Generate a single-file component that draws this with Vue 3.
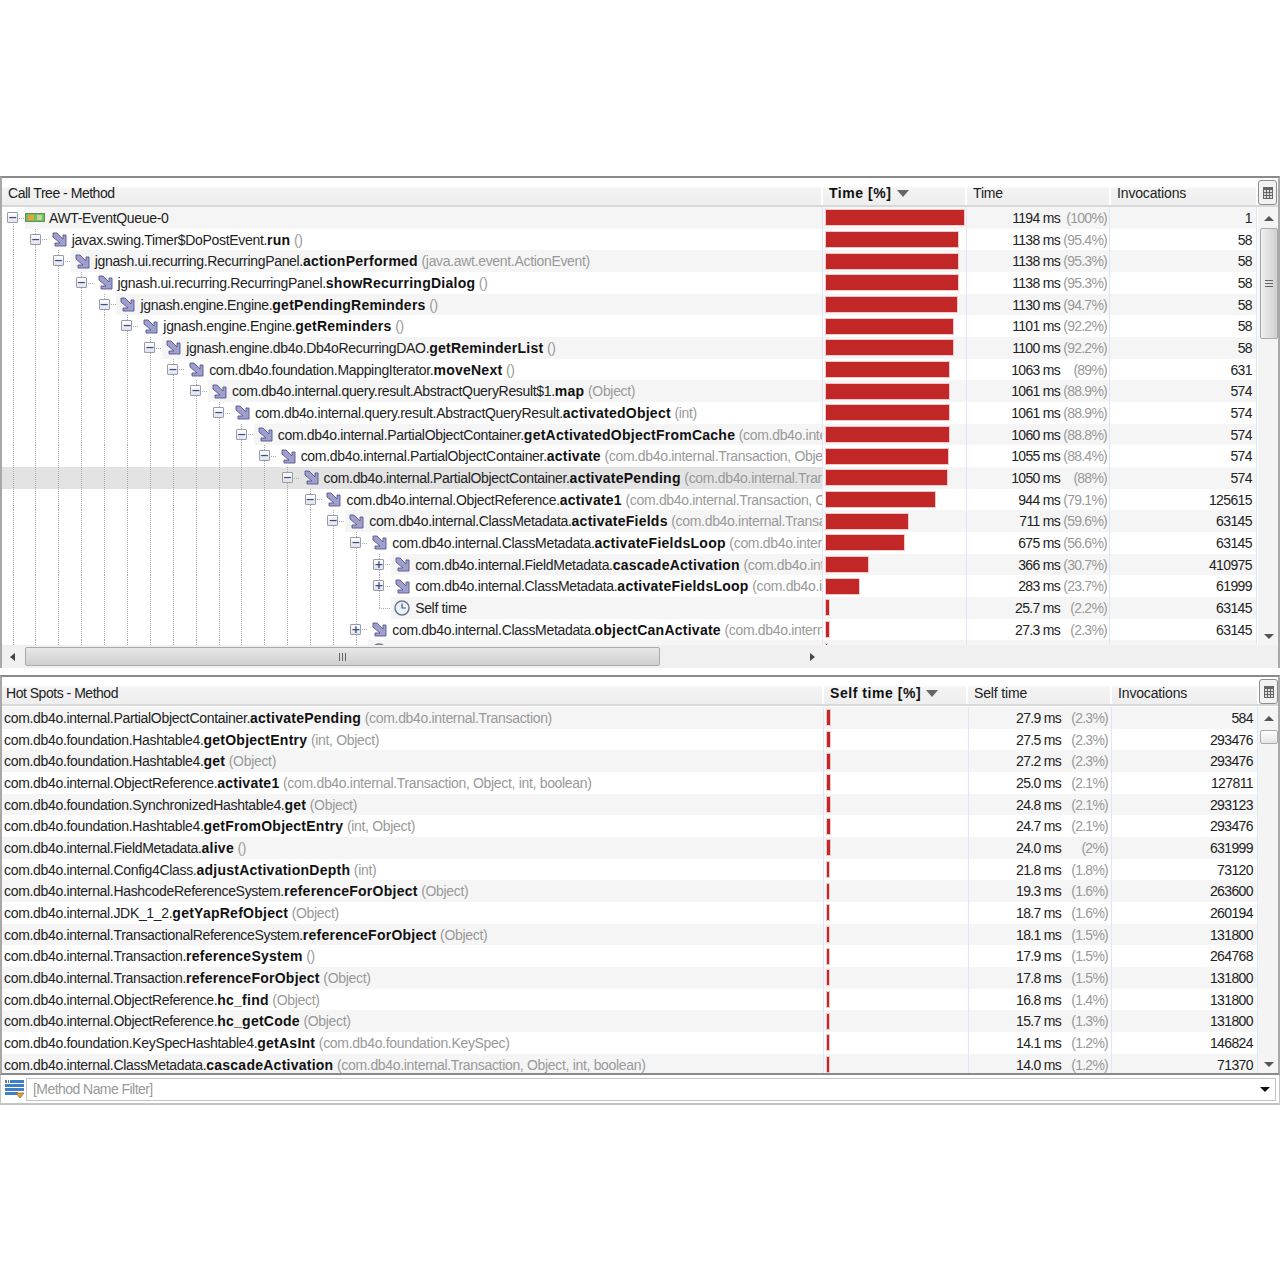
<template>
  <div class="page">
    <section class="panel tree-panel">
      <div class="head">
        <div class="hcell name">Call Tree - Method</div>
        <div class="hcell bar-h"><b>Time [%]</b><i class="sort"></i></div>
        <div class="hcell time-h">Time</div>
        <div class="hcell inv-h">Invocations</div>
        <div class="corner">
          <svg width="10" height="12" viewBox="0 0 10 12"><path d="M0 0h10v12H0z" fill="#666" /><path d="M1 3h2v2H1zM4 3h2v2H4zM7 3h2v2H7zM1 6h2v2H1zM4 6h2v2H4zM7 6h2v2H7zM1 9h2v2H1zM4 9h2v2H4zM7 9h2v2H7z" fill="#ddd" /></svg>
        </div>
      </div>
      <div class="body tree-body">
        <div class="rows">
          <div v-for="(r, i) in treeRows" :key="i" class="row" :class="{ odd: i % 2 === 1, selected: i === 12 }">
            <div class="name tree-name">
              <span v-for="g in r.depth" :key="g" class="guide"></span>
              <span class="guide own" :class="{ root: i === 0, last: r.kind === 'self' }">
                <span v-if="r.kind !== 'self'" class="box">{{ r.open ? '−' : '+' }}</span>
              </span>
              <div class="label">
                <svg v-if="r.kind === 'thread'" class="thread" width="20" height="9" viewBox="0 0 20 9">
                  <rect x="0.5" y="0.5" width="19" height="8" fill="#6fbf5f" stroke="#6d8a55" />
                  <rect x="3" y="2" width="6" height="5" fill="#e8a23c" />
                  <rect x="12" y="2" width="5" height="5" fill="#b5dd9a" />
                </svg>
                <svg v-else-if="r.kind === 'self'" class="ico clock" width="16" height="16" viewBox="0 0 16 16">
                  <circle cx="8" cy="8" r="7" fill="#eef2fa" stroke="#6b7791" stroke-width="1.5" />
                  <path d="M8 3.5V8h4" fill="none" stroke="#4a5570" stroke-width="1.2" />
                </svg>
                <svg v-else class="ico" width="15" height="15" viewBox="0 0 15 15">
                  <path d="M1 1h4l6 6V3h3v11H3v-3h5L1 5z" fill="#9f9fce" stroke="#55558a" stroke-width="0.9" stroke-linejoin="round" />
                </svg>
                <span class="txt"><template v-if="r.pkg">{{ r.pkg }}<b>{{ r.method }}</b> <em>{{ r.args }}</em></template><template v-else>{{ r.method }}</template></span>
              </div>
            </div>
            <div class="barcell"><span class="bar" :style="{ width: barWidth(r.pct) }"></span></div>
            <div class="timecell"><span class="ms">{{ r.time }}</span><span class="pct">({{ r.pct }}%)</span></div>
            <div class="invcell">{{ r.inv }}</div>
          </div>
        </div>
        <div class="vscroll">
          <span class="arrow up"></span>
          <div class="thumb big"><span class="grip"></span></div>
          <div class="spacer"></div>
          <span class="arrow down"></span>
        </div>
      </div>
      <div class="hscroll">
        <span class="arrow left"></span>
        <div class="hthumb"><span class="hgrip"></span></div>
        <div class="spacer"></div>
        <span class="arrow right"></span>
      </div>
    </section>

    <section class="panel hot-panel">
      <div class="head">
        <div class="hcell name small-pad">Hot Spots - Method</div>
        <div class="hcell bar-h"><b>Self time [%]</b><i class="sort"></i></div>
        <div class="hcell time-h">Self time</div>
        <div class="hcell inv-h">Invocations</div>
        <div class="corner">
          <svg width="10" height="12" viewBox="0 0 10 12"><path d="M0 0h10v12H0z" fill="#666" /><path d="M1 3h2v2H1zM4 3h2v2H4zM7 3h2v2H7zM1 6h2v2H1zM4 6h2v2H4zM7 6h2v2H7zM1 9h2v2H1zM4 9h2v2H4zM7 9h2v2H7z" fill="#ddd" /></svg>
        </div>
      </div>
      <div class="body hot-body">
        <div class="rows">
          <div v-for="(r, i) in hotRows" :key="i" class="row" :class="{ odd: i % 2 === 1 }">
            <div class="name hot-name"><span class="txt">{{ r.pkg }}<b>{{ r.method }}</b> <em>{{ r.args }}</em></span></div>
            <div class="barcell"><span class="bar" :style="{ width: barWidth(r.pct) }"></span></div>
            <div class="timecell"><span class="ms">{{ r.time }}</span><span class="pct">({{ r.pct }}%)</span></div>
            <div class="invcell">{{ r.inv }}</div>
          </div>
        </div>
        <div class="vscroll">
          <span class="arrow up"></span>
          <div class="thumb small"></div>
          <div class="spacer"></div>
          <span class="arrow down"></span>
        </div>
      </div>
    </section>

    <div class="filter">
      <svg width="19" height="20" viewBox="0 0 19 20">
        <path d="M0 1h2v3H0zM3 1h1v3H3z" fill="#777" />
        <path d="M5 1h14v3H5zM0 5h19v3H0zM0 9h19v3H0zM0 13h13v3H0z" fill="#3f7fc4" />
        <path d="M11 14h8l-4 5z" fill="#e0a040" stroke="#a06a20" stroke-width="0.8" />
      </svg>
      <div class="input">
        <span class="ph">[Method Name Filter]</span>
        <i class="combo"></i>
      </div>
    </div>
  </div>
</template>

<script setup>
const treeRows = [
  { depth: 0, kind: 'thread', open: true, method: 'AWT-EventQueue-0', time: '1194 ms', pct: '100', inv: '1' },
  { depth: 1, open: true, pkg: 'javax.swing.Timer$DoPostEvent.', method: 'run', args: '()', time: '1138 ms', pct: '95.4', inv: '58' },
  { depth: 2, open: true, pkg: 'jgnash.ui.recurring.RecurringPanel.', method: 'actionPerformed', args: '(java.awt.event.ActionEvent)', time: '1138 ms', pct: '95.3', inv: '58' },
  { depth: 3, open: true, pkg: 'jgnash.ui.recurring.RecurringPanel.', method: 'showRecurringDialog', args: '()', time: '1138 ms', pct: '95.3', inv: '58' },
  { depth: 4, open: true, pkg: 'jgnash.engine.Engine.', method: 'getPendingReminders', args: '()', time: '1130 ms', pct: '94.7', inv: '58' },
  { depth: 5, open: true, pkg: 'jgnash.engine.Engine.', method: 'getReminders', args: '()', time: '1101 ms', pct: '92.2', inv: '58' },
  { depth: 6, open: true, pkg: 'jgnash.engine.db4o.Db4oRecurringDAO.', method: 'getReminderList', args: '()', time: '1100 ms', pct: '92.2', inv: '58' },
  { depth: 7, open: true, pkg: 'com.db4o.foundation.MappingIterator.', method: 'moveNext', args: '()', time: '1063 ms', pct: '89', inv: '631' },
  { depth: 8, open: true, pkg: 'com.db4o.internal.query.result.AbstractQueryResult$1.', method: 'map', args: '(Object)', time: '1061 ms', pct: '88.9', inv: '574' },
  { depth: 9, open: true, pkg: 'com.db4o.internal.query.result.AbstractQueryResult.', method: 'activatedObject', args: '(int)', time: '1061 ms', pct: '88.9', inv: '574' },
  { depth: 10, open: true, pkg: 'com.db4o.internal.PartialObjectContainer.', method: 'getActivatedObjectFromCache', args: '(com.db4o.internal.Transaction, Object)', time: '1060 ms', pct: '88.8', inv: '574' },
  { depth: 11, open: true, pkg: 'com.db4o.internal.PartialObjectContainer.', method: 'activate', args: '(com.db4o.internal.Transaction, Object, int)', time: '1055 ms', pct: '88.4', inv: '574' },
  { depth: 12, open: true, pkg: 'com.db4o.internal.PartialObjectContainer.', method: 'activatePending', args: '(com.db4o.internal.Transaction)', time: '1050 ms', pct: '88', inv: '574' },
  { depth: 13, open: true, pkg: 'com.db4o.internal.ObjectReference.', method: 'activate1', args: '(com.db4o.internal.Transaction, Object, int, boolean)', time: '944 ms', pct: '79.1', inv: '125615' },
  { depth: 14, open: true, pkg: 'com.db4o.internal.ClassMetadata.', method: 'activateFields', args: '(com.db4o.internal.Transaction, Object, int)', time: '711 ms', pct: '59.6', inv: '63145' },
  { depth: 15, open: true, pkg: 'com.db4o.internal.ClassMetadata.', method: 'activateFieldsLoop', args: '(com.db4o.internal.Transaction, Object)', time: '675 ms', pct: '56.6', inv: '63145' },
  { depth: 16, open: false, pkg: 'com.db4o.internal.FieldMetadata.', method: 'cascadeActivation', args: '(com.db4o.internal.Transaction)', time: '366 ms', pct: '30.7', inv: '410975' },
  { depth: 16, open: false, pkg: 'com.db4o.internal.ClassMetadata.', method: 'activateFieldsLoop', args: '(com.db4o.internal.Transaction)', time: '283 ms', pct: '23.7', inv: '61999' },
  { depth: 16, kind: 'self', method: 'Self time', time: '25.7 ms', pct: '2.2', inv: '63145' },
  { depth: 15, open: false, pkg: 'com.db4o.internal.ClassMetadata.', method: 'objectCanActivate', args: '(com.db4o.internal.Transaction)', time: '27.3 ms', pct: '2.3', inv: '63145' },
  { depth: 15, kind: 'self', method: 'Self time', time: '7.1 ms', pct: '0.6', inv: '63145' }
];

const hotRows = [
  { pkg: 'com.db4o.internal.PartialObjectContainer.', method: 'activatePending', args: '(com.db4o.internal.Transaction)', time: '27.9 ms', pct: '2.3', inv: '584' },
  { pkg: 'com.db4o.foundation.Hashtable4.', method: 'getObjectEntry', args: '(int, Object)', time: '27.5 ms', pct: '2.3', inv: '293476' },
  { pkg: 'com.db4o.foundation.Hashtable4.', method: 'get', args: '(Object)', time: '27.2 ms', pct: '2.3', inv: '293476' },
  { pkg: 'com.db4o.internal.ObjectReference.', method: 'activate1', args: '(com.db4o.internal.Transaction, Object, int, boolean)', time: '25.0 ms', pct: '2.1', inv: '127811' },
  { pkg: 'com.db4o.foundation.SynchronizedHashtable4.', method: 'get', args: '(Object)', time: '24.8 ms', pct: '2.1', inv: '293123' },
  { pkg: 'com.db4o.foundation.Hashtable4.', method: 'getFromObjectEntry', args: '(int, Object)', time: '24.7 ms', pct: '2.1', inv: '293476' },
  { pkg: 'com.db4o.internal.FieldMetadata.', method: 'alive', args: '()', time: '24.0 ms', pct: '2', inv: '631999' },
  { pkg: 'com.db4o.internal.Config4Class.', method: 'adjustActivationDepth', args: '(int)', time: '21.8 ms', pct: '1.8', inv: '73120' },
  { pkg: 'com.db4o.internal.HashcodeReferenceSystem.', method: 'referenceForObject', args: '(Object)', time: '19.3 ms', pct: '1.6', inv: '263600' },
  { pkg: 'com.db4o.internal.JDK_1_2.', method: 'getYapRefObject', args: '(Object)', time: '18.7 ms', pct: '1.6', inv: '260194' },
  { pkg: 'com.db4o.internal.TransactionalReferenceSystem.', method: 'referenceForObject', args: '(Object)', time: '18.1 ms', pct: '1.5', inv: '131800' },
  { pkg: 'com.db4o.internal.Transaction.', method: 'referenceSystem', args: '()', time: '17.9 ms', pct: '1.5', inv: '264768' },
  { pkg: 'com.db4o.internal.Transaction.', method: 'referenceForObject', args: '(Object)', time: '17.8 ms', pct: '1.5', inv: '131800' },
  { pkg: 'com.db4o.internal.ObjectReference.', method: 'hc_find', args: '(Object)', time: '16.8 ms', pct: '1.4', inv: '131800' },
  { pkg: 'com.db4o.internal.ObjectReference.', method: 'hc_getCode', args: '(Object)', time: '15.7 ms', pct: '1.3', inv: '131800' },
  { pkg: 'com.db4o.foundation.KeySpecHashtable4.', method: 'getAsInt', args: '(com.db4o.foundation.KeySpec)', time: '14.1 ms', pct: '1.2', inv: '146824' },
  { pkg: 'com.db4o.internal.ClassMetadata.', method: 'cascadeActivation', args: '(com.db4o.internal.Transaction, Object, int, boolean)', time: '14.0 ms', pct: '1.2', inv: '71370' }
];

function barWidth(pct) {
  return (138 * parseFloat(pct)) / 100 + 'px';
}
</script>

<style>
body {
  background: #fff;
}
</style>

<style scoped>
.page {
  width: 1280px;
  padding-top: 176px;
  font-family: "Liberation Sans", "Noto Sans", sans-serif;
  font-size: 14px;
  letter-spacing: -0.32px;
  color: #222;
}

.panel {
  border-top: 2px solid #8a8a8a;
  border-left: 2px solid #a8a8a8;
  border-right: 2px solid #a8a8a8;
}

.hot-panel {
  margin-top: 7px;
  border-bottom: 2px solid #8a8a8a;
}

.head {
  display: flex;
  height: 27px;
  background: linear-gradient(#fff 30%, #f3f3f3 40%, #eeeeee);
  border-bottom: 2px solid #d8d8d8;
}

.hcell {
  display: flex;
  align-items: center;
  box-sizing: border-box;
  border-right: 2px solid #fff;
  padding-left: 6px;
  padding-top: 3px;
  flex: none;
  letter-spacing: -0.15px;
}

.hcell.name {
  letter-spacing: -0.48px;
}

.hcell.small-pad {
  padding-left: 4px;
}

.hot-panel .hcell {
  padding-top: 5px;
}

.hcell b {
  font-weight: 700;
  color: #111;
  letter-spacing: 0.55px;
}

.sort {
  width: 0;
  height: 0;
  margin-left: 5px;
  border-left: 6px solid transparent;
  border-right: 6px solid transparent;
  border-top: 7px solid #666;
}

.name {
  width: 821px;
  flex: none;
  box-sizing: border-box;
}

.bar-h {
  width: 144px;
}

.time-h {
  width: 144px;
}

.inv-h {
  width: 147px;
}

.hot-panel .name {
  width: 822px;
}

.corner {
  width: 19px;
  height: 25px;
  margin-top: 2px;
  border: 1px solid #8e8e8e;
  border-radius: 3px;
  background: #f2f2f2;
  display: flex;
  align-items: center;
  justify-content: center;
  box-sizing: border-box;
}

.body {
  display: flex;
  overflow: hidden;
}

.tree-body {
  height: 438px;
}

.hot-body {
  height: 366px;
  padding-top: 1px;
}

.rows {
  flex: none;
  width: 1256px;
}

.row {
  display: flex;
  height: 21.68px;
  background: #fff;
}

.row > .barcell,
.row > .timecell,
.row > .invcell {
  background: #f5f5f5;
}

.row.odd > .barcell,
.row.odd > .timecell,
.row.odd > .invcell {
  background: #fff;
}

.tree-name {
  display: flex;
  height: 100%;
  overflow: hidden;
  border-right: 1px solid #dfe6f5;
}

.hot-name {
  display: flex;
  align-items: center;
  height: 100%;
  overflow: hidden;
  white-space: nowrap;
  padding-left: 2px;
  background: #f5f5f5;
  border-right: 1px solid #dfe6f5;
}

.odd .hot-name {
  background: #fff;
}

.guide {
  flex: none;
  width: 22.9px;
  height: 100%;
  position: relative;
  background: repeating-linear-gradient(#aaa 0 1px, transparent 1px 2px) 10.5px 0 / 1px 100% no-repeat;
}

.guide.own.root {
  background-position: 10.5px 11px;
}

.guide.own.last {
  background-size: 1px 50%;
}

.guide.own::after {
  content: "";
  position: absolute;
  left: 11px;
  right: 0;
  top: 10.5px;
  height: 1px;
  background: repeating-linear-gradient(90deg, #aaa 0 1px, transparent 1px 2px);
}

.box {
  position: absolute;
  z-index: 1;
  left: 5px;
  top: 5px;
  width: 11px;
  height: 11px;
  box-sizing: border-box;
  border: 1px solid #9a9aa8;
  border-radius: 1px;
  background: linear-gradient(#fff, #dfe3ee);
  color: #3d4f80;
  font: 700 11px/9px "DejaVu Sans", sans-serif;
  letter-spacing: 0;
  text-align: center;
}

.label {
  flex: 1;
  min-width: 0;
  display: flex;
  align-items: center;
  white-space: nowrap;
  background: #f5f5f5;
  height: 100%;
}

.odd .label {
  background: #fff;
}

.selected .tree-name,
.selected .label {
  background: #e3e3e3;
}

.ico {
  flex: none;
  margin: 0 5px 0 4px;
}

.ico.clock {
  margin-left: 3px;
}

.thread {
  flex: none;
  margin: 0 4px 0 0;
}

.txt b {
  font-weight: 700;
  color: #111;
  letter-spacing: 0.25px;
}

.txt em {
  font-style: normal;
  color: #999;
}

.barcell {
  flex: none;
  width: 144px;
  display: flex;
  align-items: center;
  padding-left: 3px;
  box-sizing: border-box;
  border-right: 1px solid #dfe6f5;
}

.hot-panel .barcell {
  width: 145px;
}

.bar {
  display: block;
  height: 15px;
  background: #c22727;
  box-shadow: 0 0 0 1px #f0c8c8;
}

.timecell {
  flex: none;
  width: 143px;
  box-sizing: border-box;
  display: flex;
  justify-content: flex-end;
  align-items: center;
  padding-right: 2px;
  border-right: 1px solid #dfe6f5;
}

.hot-panel .timecell {
  padding-right: 3px;
}

.ms {
  color: #222;
  letter-spacing: -0.7px;
}

.pct {
  width: 47px;
  text-align: right;
  color: #999;
  letter-spacing: -0.75px;
}

.invcell {
  flex: none;
  width: 147px;
  box-sizing: border-box;
  display: flex;
  align-items: center;
  justify-content: flex-end;
  padding-right: 4px;
  letter-spacing: -0.6px;
  border-right: 1px solid #dfe6f5;
}

.hot-panel .invcell {
  width: 146px;
}

.vscroll {
  flex: none;
  width: 20px;
  padding-left: 1px;
  box-sizing: border-box;
  display: flex;
  flex-direction: column;
  align-items: center;
  background: #f4f4f4;
}

.spacer {
  flex: 1;
}

.arrow {
  flex: none;
  width: 0;
  height: 0;
}

.arrow.up {
  margin: 9px 0 7px;
  border-left: 5px solid transparent;
  border-right: 5px solid transparent;
  border-bottom: 5px solid #555;
}

.arrow.down {
  margin: 0 0 6px;
  border-left: 5px solid transparent;
  border-right: 5px solid transparent;
  border-top: 5px solid #555;
}

.arrow.left {
  margin-left: 8px;
  border-top: 4px solid transparent;
  border-bottom: 4px solid transparent;
  border-right: 5px solid #444;
}

.arrow.right {
  margin-right: 7px;
  border-top: 4px solid transparent;
  border-bottom: 4px solid transparent;
  border-left: 5px solid #444;
}

.thumb {
  width: 18px;
  box-sizing: border-box;
  border: 1px solid #aaa;
  border-radius: 2px;
  display: flex;
  align-items: center;
  justify-content: center;
}

.thumb.big {
  height: 111px;
  background: linear-gradient(90deg, #f0f0f0, #d0d0d0);
}

.thumb.small {
  height: 14px;
  margin-top: 2px;
  background: linear-gradient(#fff, #e4e4e4);
}

.grip {
  width: 8px;
  height: 7px;
  background: repeating-linear-gradient(#666 0 1px, transparent 1px 3px);
}

.hscroll {
  display: flex;
  align-items: center;
  height: 23px;
  padding-right: 456px;
  background: #f0f0f0;
}

.hthumb {
  width: 635px;
  height: 19px;
  margin-left: 10px;
  box-sizing: border-box;
  border: 1px solid #aaa;
  border-radius: 2px;
  background: linear-gradient(#e8e8e8, #cfcfcf);
  display: flex;
  align-items: center;
  justify-content: center;
}

.hgrip {
  width: 8px;
  height: 8px;
  background: repeating-linear-gradient(90deg, #666 0 1px, transparent 1px 3px);
}

.filter {
  display: flex;
  align-items: center;
  gap: 2px;
  height: 28px;
  padding: 0 3px 0 4px;
  border-left: 1px solid #c4c4c4;
  border-right: 1px solid #c4c4c4;
  border-bottom: 2px solid #c4c4c4;
}

.input {
  flex: 1;
  height: 23px;
  box-sizing: border-box;
  border: 1px solid #c4c4c4;
  display: flex;
  align-items: center;
  justify-content: space-between;
  padding: 0 5px 0 6px;
}

.ph {
  color: #999;
  letter-spacing: -0.55px;
}

.combo {
  width: 0;
  height: 0;
  border-left: 5px solid transparent;
  border-right: 5px solid transparent;
  border-top: 5px solid #111;
}
</style>
